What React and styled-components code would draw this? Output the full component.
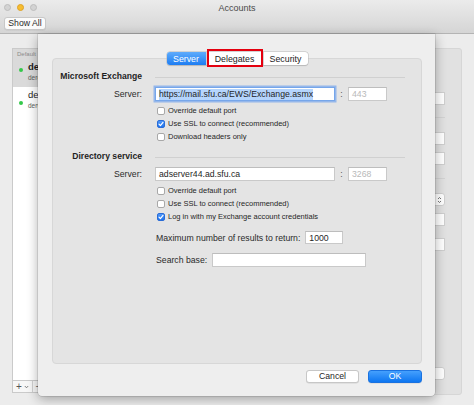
import React from "react";
import styled, { createGlobalStyle } from "styled-components";

const Global = createGlobalStyle`
  html, body { margin: 0; padding: 0; }
  body {
    width: 474px;
    height: 405px;
    overflow: hidden;
    background: #6b6b6b;
    font-family: "Liberation Sans", Arial, sans-serif;
    color: #262626;
  }
  #root { width: 474px; height: 405px; }
  * { box-sizing: border-box; }
`;

const Window = styled.div`
  position: relative;
  width: 474px;
  height: 405px;
  display: flex;
  flex-direction: column;
  overflow: hidden;
`;

/* ---------- title bar + toolbar ---------- */

const TitleBar = styled.header`
  flex: none;
  height: 34px;
  background: linear-gradient(#ebebeb, #d5d5d5);
  border-bottom: 1px solid #b4b4b4;
  display: flex;
  flex-direction: column;
`;

const TitleRow = styled.div`
  height: 14px;
  display: grid;
  grid-template-columns: 1fr auto 1fr;
  align-items: center;
  padding: 0 4px;
`;

const Lights = styled.div`
  display: flex;
  gap: 6px;
`;

const Light = styled.span`
  width: 7px;
  height: 7px;
  border-radius: 50%;
  background: ${(p) => p.$color};
  border: 0.5px solid ${(p) => p.$edge};
`;

const Title = styled.div`
  font-size: 9px;
  color: #4a4a4a;
  padding-top: 1px;
`;

const Toolbar = styled.div`
  display: flex;
  padding: 3px 4px 0;
`;

const ToolButton = styled.button`
  height: 13px;
  width: 42px;
  padding: 0;
  font-family: inherit;
  font-size: 8.7px;
  color: #2a2a2a;
  background: #fbfbfb;
  border: 1px solid #c8c8c8;
  border-radius: 3px;
  box-shadow: 0 0.5px 0 rgba(0, 0, 0, 0.08);
  line-height: 11px;
`;

/* ---------- window body (behind the sheet) ---------- */

const Body = styled.main`
  flex: 1;
  display: flex;
  gap: 10px;
  padding: 14px 12px 10px 12px;
  background: #ececec;
`;

/* only the sliver left of the sheet is ever visible */
const Sidebar = styled.aside`
  width: 28px;
  flex: none;
  display: flex;
  flex-direction: column;
  padding-bottom: 2px;
  overflow: hidden;
`;

const AccountList = styled.div`
  flex: 1;
  width: 140px;
  background: #ffffff;
  border: 1px solid #cacaca;
  border-bottom: none;
  display: flex;
  flex-direction: column;
`;

const ListHeader = styled.div`
  height: 11px;
  padding-left: 4px;
  font-size: 6px;
  line-height: 11px;
  color: #8c8c8c;
  background: #dadada;
  white-space: nowrap;
`;

const AccountRow = styled.div`
  height: 27px;
  display: flex;
  padding: ${(p) => p.$pad}px 0 0 6px;
  background: ${(p) => (p.$selected ? "#dadada" : "transparent")};
`;

const StatusDot = styled.span`
  flex: none;
  width: 4px;
  height: 4px;
  margin-top: ${(p) => p.$top}px;
  border-radius: 50%;
  background: #34c84a;
`;

const AccountText = styled.div`
  margin-left: 5px;
  display: flex;
  flex-direction: column;
  gap: 2px;
  white-space: nowrap;
`;

const AccountName = styled.span`
  font-size: 9.5px;
  line-height: 10px;
  font-weight: ${(p) => (p.$bold ? 700 : 400)};
  color: #1e1e1e;
`;

const AccountSub = styled.span`
  font-size: 6.5px;
  line-height: 8px;
  color: #5c5c5c;
`;

const ListButtons = styled.div`
  height: 13px;
  width: 140px;
  display: flex;
  align-items: center;
  border: 1px solid #cacaca;
  background: #f7f7f7;
  font-size: 10px;
  color: #555;
`;

const ListButton = styled.span`
  display: flex;
  align-items: center;
  gap: 2px;
  height: 100%;
  padding: 0 3px;
  border-right: 1px solid #d0d0d0;
  line-height: 11px;
`;

const DetailPane = styled.section`
  flex: 1;
  display: flex;
  flex-direction: column;
  align-items: flex-end;
  padding: 0 16px 14px 0;
  background: #e1e1e1;
  border: 1px solid #d6d6d6;
  border-radius: 3px;
`;

const PaneField = styled.div`
  flex: none;
  width: 110px;
  height: 13px;
  margin-top: ${(p) => p.$top}px;
  background: #ffffff;
  border: 1px solid #cfcfcf;
  border-radius: ${(p) => (p.$popup ? 3 : 0)}px;
  display: flex;
  align-items: center;
  justify-content: flex-end;
  padding-right: 2px;
`;

const PaneRule = styled.div`
  flex: none;
  align-self: stretch;
  height: 1px;
  margin: ${(p) => p.$top}px 0 0 10px;
  background: #d3d3d3;
`;

const PaneBottom = styled(PaneField)`
  margin-top: auto;
  border-radius: 3px;
`;

/* ---------- sheet ---------- */

const Sheet = styled.div`
  position: absolute;
  left: 38px;
  top: 34px;
  width: 397px;
  height: 362px;
  z-index: 2;
  display: flex;
  flex-direction: column;
  padding: 18px 13px 13px 14px;
  background: #eeeeee;
  border-radius: 0 0 4px 4px;
  box-shadow: 0 3px 12px rgba(0, 0, 0, 0.32), 0 0 0 0.5px rgba(0, 0, 0, 0.18);
`;

const TabBar = styled.div`
  align-self: center;
  position: relative;
  z-index: 1;
  display: flex;
  height: 13px;
  margin-bottom: -7px;
  border-radius: 3px;
  background: #ffffff;
  box-shadow: 0 0 0 0.5px #b9b9b9, 0 0.5px 1px rgba(0, 0, 0, 0.18);
`;

const Tab = styled.div`
  position: relative;
  width: ${(p) => p.$w}px;
  display: flex;
  align-items: center;
  justify-content: center;
  font-size: 8.8px;
  color: ${(p) => (p.$active ? "#ffffff" : "#222222")};
  background: ${(p) => (p.$active ? "linear-gradient(#5eabfc, #1d7df2)" : "transparent")};
  border-radius: ${(p) => (p.$first ? "3px 0 0 3px" : p.$last ? "0 3px 3px 0" : "0")};
  & + & {
    border-left: 1px solid #d2d2d2;
  }
`;

/* red frame drawn over the highlighted tab */
const Callout = styled.span`
  position: absolute;
  top: -3px;
  bottom: -2px;
  left: 0;
  right: 0;
  border: 2px solid #e4000f;
  pointer-events: none;
`;

const GroupBox = styled.div`
  flex: 1;
  display: flex;
  flex-direction: column;
  padding-right: 16px;
  background: #e4e4e4;
  border: 1px solid #d7d7d7;
  border-radius: 4px;
`;

const SectionHeading = styled.div`
  display: flex;
  align-items: center;
  height: 12px;
  margin-top: ${(p) => p.$top}px;
`;

const HeadingText = styled.span`
  width: 89px;
  text-align: right;
  font-size: 8.6px;
  font-weight: 700;
  color: #1f1f1f;
  white-space: nowrap;
`;

const HeadingRule = styled.span`
  flex: 1;
  height: 1px;
  margin-left: 13px;
  margin-top: 2px;
  background: #d0d0d0;
`;

const FieldRow = styled.div`
  display: flex;
  align-items: center;
  height: 14px;
  margin-top: ${(p) => p.$top}px;
`;

const FieldLabel = styled.span`
  width: 89px;
  margin-right: 13px;
  text-align: right;
  font-size: 8.7px;
  color: #2a2a2a;
`;

const TextField = styled.div`
  flex: none;
  width: ${(p) => p.$w}px;
  height: ${(p) => p.$h || 14}px;
  display: flex;
  align-items: center;
  padding: 0 3px;
  font-size: 8.7px;
  white-space: nowrap;
  overflow: hidden;
  color: ${(p) => (p.$placeholder ? "#b9b9b9" : "#1f1f1f")};
  background: #ffffff;
  border: 1px solid ${(p) => (p.$focused ? "#76a6ea" : "#c9c9c9")};
  border-top-color: ${(p) => (p.$focused ? "#76a6ea" : "#bdbdbd")};
  box-shadow: ${(p) => (p.$focused ? "0 0 0 1.5px rgba(96, 154, 238, 0.6)" : "none")};
`;

const Selection = styled.span`
  background: #b5d5fd;
  line-height: 11px;
`;

const PortColon = styled.span`
  width: 13px;
  text-align: center;
  font-size: 8.7px;
  color: #555;
`;

const CheckRow = styled.label`
  display: flex;
  align-items: center;
  gap: 3px;
  height: 13px;
  margin-top: ${(p) => p.$top || 0}px;
  padding-left: 104px;
  font-size: 7.5px;
  color: #262626;
  white-space: nowrap;
`;

const Box = styled.span`
  flex: none;
  width: 8px;
  height: 8px;
  border-radius: 2px;
  display: flex;
  align-items: center;
  justify-content: center;
  background: ${(p) => (p.$checked ? "linear-gradient(#4d97fa, #1f74ee)" : "#ffffff")};
  border: 0.5px solid ${(p) => (p.$checked ? "#2a6cd6" : "#a8a8a8")};
`;

const InlineRow = styled.div`
  display: flex;
  align-items: center;
  gap: 5px;
  margin-top: ${(p) => p.$top}px;
  padding-left: 103px;
`;

const InlineLabel = styled.span`
  font-size: 8.7px;
  color: #2a2a2a;
  white-space: nowrap;
`;

const ButtonRow = styled.div`
  display: flex;
  justify-content: flex-end;
  gap: 9px;
  margin-top: 6px;
`;

const PushButton = styled.button`
  width: ${(p) => p.$w}px;
  height: 13px;
  padding: 0;
  font-family: inherit;
  font-size: 8.7px;
  line-height: 11px;
  border-radius: 3px;
  color: ${(p) => (p.$primary ? "#ffffff" : "#262626")};
  background: ${(p) => (p.$primary ? "linear-gradient(#45a0fd, #0d76f1)" : "#ffffff")};
  border: 1px solid ${(p) => (p.$primary ? "#1a72e0" : "#c7c7c7")};
  box-shadow: 0 0.5px 0.5px rgba(0, 0, 0, 0.12);
`;

const Check = () => (
  <svg width="6" height="6" viewBox="0 0 6 6">
    <path d="M1 3.2 L2.4 4.6 L5 1.4" fill="none" stroke="#fff" strokeWidth="1.2" strokeLinecap="round" strokeLinejoin="round" />
  </svg>
);

const Stepper = () => (
  <svg width="5" height="8" viewBox="0 0 5 8">
    <path d="M1 3 L2.5 1.5 L4 3 M1 5 L2.5 6.5 L4 5" fill="none" stroke="#555" strokeWidth="0.8" />
  </svg>
);

const Chevron = () => (
  <svg width="5" height="4" viewBox="0 0 5 4">
    <path d="M0.8 1 L2.5 2.8 L4.2 1" fill="none" stroke="#666" strokeWidth="0.8" />
  </svg>
);

const CheckOption = ({ checked, top, children }) => (
  <CheckRow $top={top}>
    <Box $checked={checked}>{checked && <Check />}</Box>
    {children}
  </CheckRow>
);

export default function App() {
  return (
    <>
      <Global />
      <Window>
        <TitleBar>
          <TitleRow>
            <Lights>
              <Light $color="#d3d3d3" $edge="#bdbdbd" />
              <Light $color="#f6bd31" $edge="#dea227" />
              <Light $color="#d3d3d3" $edge="#bdbdbd" />
            </Lights>
            <Title>Accounts</Title>
            <span />
          </TitleRow>
          <Toolbar>
            <ToolButton>Show All</ToolButton>
          </Toolbar>
        </TitleBar>

        <Body>
          <Sidebar>
            <AccountList>
              <ListHeader>Default</ListHeader>
              <AccountRow $selected $pad={2}>
                <StatusDot $top={6} />
                <AccountText>
                  <AccountName $bold>dev</AccountName>
                  <AccountSub>derek</AccountSub>
                </AccountText>
              </AccountRow>
              <AccountRow $pad={3}>
                <StatusDot $top={11} />
                <AccountText>
                  <AccountName>dept</AccountName>
                  <AccountSub>derw</AccountSub>
                </AccountText>
              </AccountRow>
            </AccountList>
            <ListButtons>
              <ListButton>
                +<Chevron />
              </ListButton>
              <ListButton>−</ListButton>
            </ListButtons>
          </Sidebar>

          <DetailPane>
            <PaneField $top={43} />
            <PaneRule $top={12} />
            <PaneField $top={14} />
            <PaneField $top={7} />
            <PaneRule $top={13} />
            <PaneField $top={14} $popup>
              <Stepper />
            </PaneField>
            <PaneField $top={7} />
            <PaneField $top={12} />
            <PaneBottom />
          </DetailPane>
        </Body>

        <Sheet>
          <TabBar>
            <Tab $w={39} $active $first>Server</Tab>
            <Tab $w={57}>
              Delegates
              <Callout />
            </Tab>
            <Tab $w={45} $last>Security</Tab>
          </TabBar>

          <GroupBox>
            <SectionHeading $top={11}>
              <HeadingText>Microsoft Exchange</HeadingText>
              <HeadingRule />
            </SectionHeading>
            <FieldRow $top={5}>
              <FieldLabel>Server:</FieldLabel>
              <TextField $w={180} $focused>
                <Selection>https://mail.sfu.ca/EWS/Exchange.asmx</Selection>
              </TextField>
              <PortColon>:</PortColon>
              <TextField $w={39} $placeholder>443</TextField>
            </FieldRow>
            <CheckOption top={3}>Override default port</CheckOption>
            <CheckOption checked>Use SSL to connect (recommended)</CheckOption>
            <CheckOption>Download headers only</CheckOption>

            <SectionHeading $top={7}>
              <HeadingText>Directory service</HeadingText>
              <HeadingRule />
            </SectionHeading>
            <FieldRow $top={5}>
              <FieldLabel>Server:</FieldLabel>
              <TextField $w={180}>adserver44.ad.sfu.ca</TextField>
              <PortColon>:</PortColon>
              <TextField $w={39} $placeholder>3268</TextField>
            </FieldRow>
            <CheckOption top={3}>Override default port</CheckOption>
            <CheckOption>Use SSL to connect (recommended)</CheckOption>
            <CheckOption checked>Log in with my Exchange account credentials</CheckOption>

            <InlineRow $top={8}>
              <InlineLabel>Maximum number of results to return:</InlineLabel>
              <TextField $w={38} $h={13}>1000</TextField>
            </InlineRow>
            <InlineRow $top={9}>
              <InlineLabel>Search base:</InlineLabel>
              <TextField $w={154} />
            </InlineRow>
          </GroupBox>

          <ButtonRow>
            <PushButton $w={53}>Cancel</PushButton>
            <PushButton $w={54} $primary>OK</PushButton>
          </ButtonRow>
        </Sheet>
      </Window>
    </>
  );
}
